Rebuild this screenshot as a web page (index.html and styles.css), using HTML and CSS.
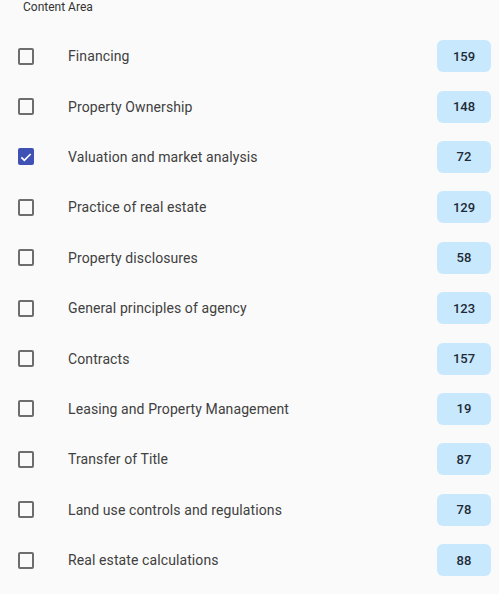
FILE: index.html
```html
<!DOCTYPE html>
<html>
<head>
<meta charset="utf-8">
<link rel="stylesheet" href="styles.css">
</head>
<body>
<div class="panel">
  <div class="title">Content Area</div>
  <ul class="list">
    <li class="row"><span class="cb"></span><span class="label">Financing</span><span class="badge">159</span></li>
    <li class="row"><span class="cb"></span><span class="label">Property Ownership</span><span class="badge">148</span></li>
    <li class="row"><span class="cb checked"><svg viewBox="0 0 24 24" width="16" height="16"><path d="M5 12.5l4.5 4.5L19 7.5" fill="none" stroke="#fff" stroke-width="2.6"/></svg></span><span class="label">Valuation and market analysis</span><span class="badge">72</span></li>
    <li class="row"><span class="cb"></span><span class="label">Practice of real estate</span><span class="badge">129</span></li>
    <li class="row"><span class="cb"></span><span class="label">Property disclosures</span><span class="badge">58</span></li>
    <li class="row"><span class="cb"></span><span class="label">General principles of agency</span><span class="badge">123</span></li>
    <li class="row"><span class="cb"></span><span class="label">Contracts</span><span class="badge">157</span></li>
    <li class="row"><span class="cb"></span><span class="label">Leasing and Property Management</span><span class="badge">19</span></li>
    <li class="row"><span class="cb"></span><span class="label">Transfer of Title</span><span class="badge">87</span></li>
    <li class="row"><span class="cb"></span><span class="label">Land use controls and regulations</span><span class="badge">78</span></li>
    <li class="row"><span class="cb"></span><span class="label">Real estate calculations</span><span class="badge">88</span></li>
  </ul>
</div>
</body>
</html>
```
FILE: styles.css
```css
html, body {
  margin: 0;
  padding: 0;
  background: #fafafa;
  font-family: Roboto, "Liberation Sans", Arial, sans-serif;
}
.panel {
  width: 499px;
}
.title {
  font-size: 12px;
  color: #333;
  padding-left: 23px;
  height: 14px;
  line-height: 14px;
}
.list {
  list-style: none;
  margin: 0;
  padding: 17px 0 0 0;
}
.row {
  display: flex;
  align-items: center;
  height: 50.4px;
}
.cb {
  box-sizing: border-box;
  width: 16px;
  height: 17px;
  border: 2px solid #6d6d6d;
  border-radius: 2px;
  margin-left: 18px;
  display: flex;
  align-items: center;
  justify-content: center;
}
.cb.checked {
  background: #3f51b5;
  border-color: #3f51b5;
}
.cb svg {
  display: block;
  flex: none;
}
.label {
  margin-left: 34px;
  flex: 1;
  font-size: 14px;
  color: #404040;
  letter-spacing: 0.1px;
}
.badge {
  width: 54px;
  height: 32px;
  margin-right: 8px;
  border-radius: 6px;
  background: #c8e8fd;
  color: #1e2a36;
  font-size: 13px;
  font-weight: 500;
  display: flex;
  align-items: center;
  justify-content: center;
}
```
